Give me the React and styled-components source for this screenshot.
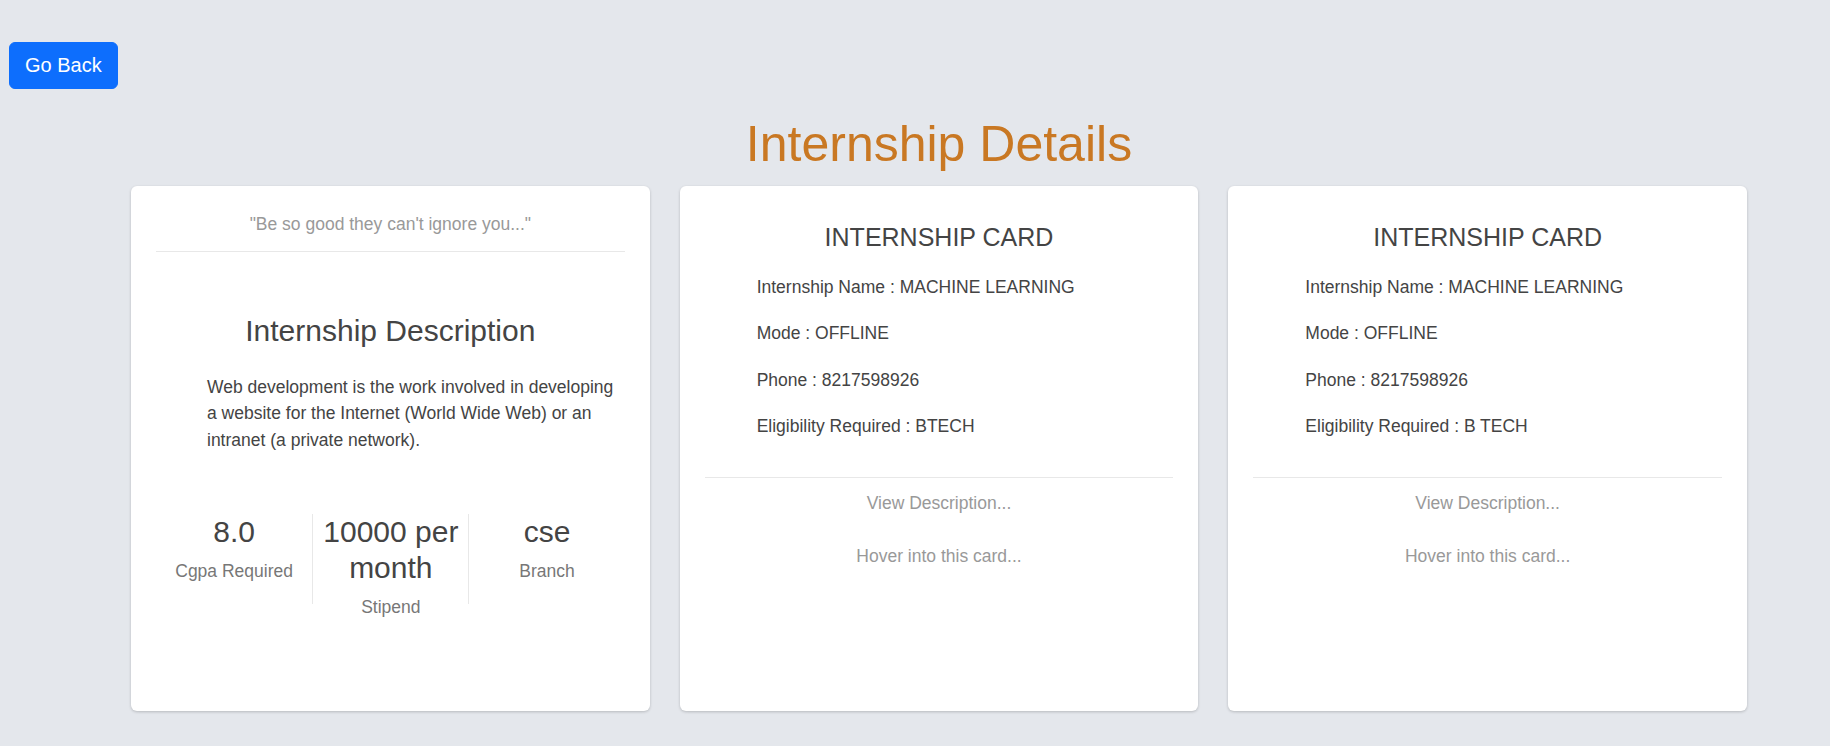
import React from 'react';
import styled, { createGlobalStyle } from 'styled-components';

const GlobalStyle = createGlobalStyle`
  html, body {
    margin: 0;
    padding: 0;
    background: #e4e7ec;
  }
  body {
    font-family: "Liberation Sans", Arial, sans-serif;
    color: #444;
  }
  * {
    box-sizing: border-box;
  }
`;

const Page = styled.div`
  min-height: 100vh;
  padding: 42px 0 0 9px;
  background: #e4e7ec;
`;

const BackButton = styled.button`
  display: block;
  height: 47px;
  padding: 0 15px;
  border: 1px solid #0d6efd;
  border-radius: 6px;
  background: #0d6efd;
  color: #fff;
  font-family: "Liberation Sans", Arial, sans-serif;
  font-size: 20px;
  cursor: pointer;
`;

const Main = styled.main`
  width: 1616px;
  margin-left: 122px;
`;

const Title = styled.h1`
  margin: 25px 0 0;
  font-size: 50px;
  line-height: 60px;
  font-weight: 400;
  color: #c97823;
  text-align: center;
`;

const CardRow = styled.div`
  display: grid;
  grid-template-columns: repeat(3, 1fr);
  gap: 30px;
  margin-top: 12px;
`;

const Card = styled.div`
  height: 525px;
  padding: 25px;
  background: #fff;
  border-radius: 6px;
  box-shadow: 0 1px 3px rgba(0, 0, 0, 0.2);
`;

const Quote = styled.p`
  margin: 0;
  font-size: 17.5px;
  line-height: 26px;
  color: #999;
  text-align: center;
`;

const Divider = styled.hr`
  margin: ${(p) => p.$margin || '0'};
  border: 0;
  border-top: 1px solid #e8e8e8;
`;

const DescTitle = styled.h3`
  margin: 61px 0 0;
  font-size: 30px;
  line-height: 36px;
  font-weight: 400;
  color: #444;
  text-align: center;
`;

const DescText = styled.p`
  margin: 25px 0 0;
  padding-left: 51px;
  font-size: 17.5px;
  line-height: 26.25px;
  color: #444;
`;

const Stats = styled.div`
  display: grid;
  grid-template-columns: repeat(3, 1fr);
  margin-top: 61px;
`;

const Stat = styled.div`
  height: 90px;
  text-align: center;
  border-left: ${(p) => (p.$first ? 'none' : '1px solid #e8e8e8')};
`;

const StatValue = styled.div`
  font-size: 30px;
  line-height: 36px;
  color: #444;
`;

const StatLabel = styled.div`
  margin-top: 8px;
  font-size: 17.5px;
  line-height: 26px;
  color: #777;
`;

const CardTitle = styled.h4`
  margin: 11px 0 0;
  font-size: 25px;
  line-height: 30px;
  font-weight: 400;
  color: #444;
  text-align: center;
`;

const InfoList = styled.div`
  display: flex;
  flex-direction: column;
  gap: 20px;
  margin: 22px 0 38px;
  padding-left: 52px;
`;

const InfoRow = styled.p`
  margin: 0;
  font-size: 17.5px;
  line-height: 26.25px;
  color: #444;
`;

const Hint = styled.p`
  margin: ${(p) => p.$top} 0 0;
  font-size: 17.5px;
  line-height: 26px;
  color: #999;
  text-align: center;
`;

const internships = [
  { name: 'MACHINE LEARNING', mode: 'OFFLINE', phone: '8217598926', eligibility: 'BTECH' },
  { name: 'MACHINE LEARNING', mode: 'OFFLINE', phone: '8217598926', eligibility: 'B TECH' },
];

function InternshipCard({ item }) {
  return (
    <Card>
      <CardTitle>INTERNSHIP CARD</CardTitle>
      <InfoList>
        <InfoRow>Internship Name : {item.name}</InfoRow>
        <InfoRow>Mode : {item.mode}</InfoRow>
        <InfoRow>Phone : {item.phone}</InfoRow>
        <InfoRow>Eligibility Required : {item.eligibility}</InfoRow>
      </InfoList>
      <Divider />
      <Hint $top="12px">View Description...</Hint>
      <Hint $top="27px">Hover into this card...</Hint>
    </Card>
  );
}

export default function App() {
  return (
    <Page>
      <GlobalStyle />
      <BackButton>Go Back</BackButton>
      <Main>
        <Title>Internship Details</Title>
        <CardRow>
          <Card>
            <Quote>"Be so good they can't ignore you..."</Quote>
            <Divider $margin="14px 0 0" />
            <DescTitle>Internship Description</DescTitle>
            <DescText>
              Web development is the work involved in developing a website for the Internet (World Wide Web) or an
              intranet (a private network).
            </DescText>
            <Stats>
              <Stat $first>
                <StatValue>8.0</StatValue>
                <StatLabel>Cgpa Required</StatLabel>
              </Stat>
              <Stat>
                <StatValue>10000 per month</StatValue>
                <StatLabel>Stipend</StatLabel>
              </Stat>
              <Stat>
                <StatValue>cse</StatValue>
                <StatLabel>Branch</StatLabel>
              </Stat>
            </Stats>
          </Card>
          {internships.map((item, i) => (
            <InternshipCard key={i} item={item} />
          ))}
        </CardRow>
      </Main>
    </Page>
  );
}
